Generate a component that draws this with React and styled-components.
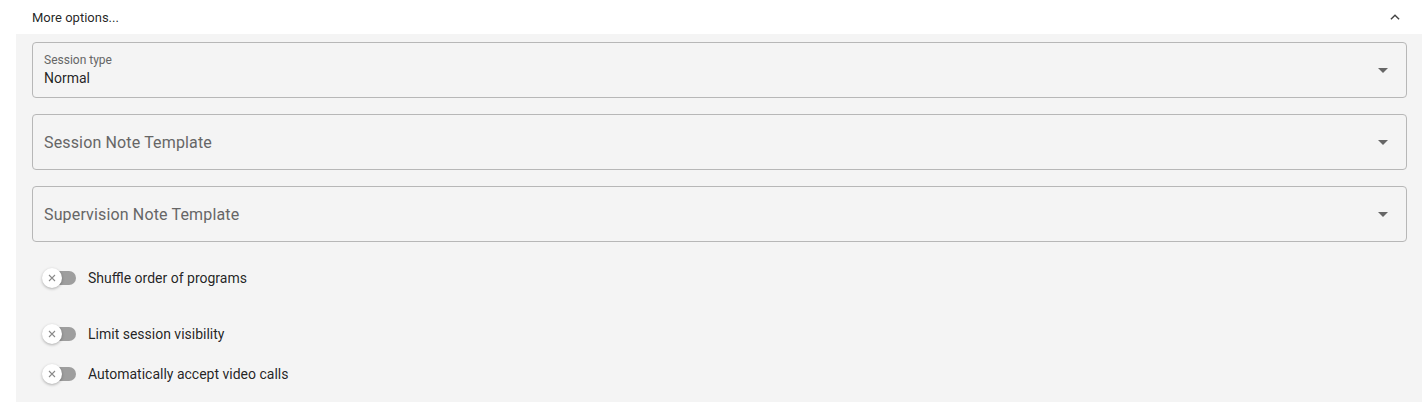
import React from "react";
import styled, { createGlobalStyle } from "styled-components";

const GlobalStyle = createGlobalStyle`
  body {
    margin: 0;
    background: #ffffff;
    font-family: Roboto, "Liberation Sans", sans-serif;
    color: rgba(0, 0, 0, 0.87);
  }
`;

const Page = styled.div`
  width: 1426px;
  height: 415px;
  background: #ffffff;
`;

const Header = styled.div`
  display: flex;
  align-items: center;
  justify-content: space-between;
  height: 34px;
  padding: 0 24px 0 32px;
`;

const HeaderTitle = styled.span`
  font-size: 13px;
  color: rgba(0, 0, 0, 0.87);
`;

const Panel = styled.div`
  margin: 0 4px 0 16px;
  background: #f4f4f4;
  padding: 8px 15px 16px 16px;
  height: 368px;
  box-sizing: border-box;
`;

const Fields = styled.div`
  display: flex;
  flex-direction: column;
  gap: 16px;
`;

const SelectBox = styled.div`
  display: flex;
  align-items: center;
  justify-content: space-between;
  height: 56px;
  box-sizing: border-box;
  border: 1px solid #b7b7b7;
  border-radius: 4px;
  padding: 0 18px 0 11px;
`;

const SelectText = styled.div`
  display: flex;
  flex-direction: column;
  padding-bottom: 2px;
`;

const SelectLabel = styled.span`
  font-size: 12px;
  color: #666666;
  line-height: 14px;
  margin-bottom: 3px;
`;

const SelectValue = styled.span`
  font-size: 14px;
  line-height: 16px;
  color: rgba(0, 0, 0, 0.87);
`;

const Placeholder = styled.span`
  font-size: 16px;
  letter-spacing: 0.15px;
  color: #666666;
`;

const Caret = styled.span`
  width: 0;
  height: 0;
  border-left: 5px solid transparent;
  border-right: 5px solid transparent;
  border-top: 5px solid #666666;
`;

const Toggles = styled.div`
  display: flex;
  flex-direction: column;
  padding: 24px 0 0 9px;
`;

const ToggleRow = styled.div`
  display: flex;
  align-items: center;
  height: 24px;
  margin-bottom: ${(p) => p.gap}px;
`;

const Switch = styled.span`
  position: relative;
  display: inline-block;
  width: 36px;
  height: 20px;
  margin-right: 11px;
`;

const Track = styled.span`
  position: absolute;
  left: 8px;
  top: 3px;
  width: 27px;
  height: 14px;
  border-radius: 7px;
  background: #9e9e9e;
`;

const Thumb = styled.span`
  position: absolute;
  left: 1px;
  top: 0;
  width: 20px;
  height: 20px;
  border-radius: 50%;
  background: #ffffff;
  box-shadow: 0 1px 3px rgba(0, 0, 0, 0.3);
  display: flex;
  align-items: center;
  justify-content: center;
`;

const ToggleLabel = styled.span`
  font-size: 14px;
  color: rgba(0, 0, 0, 0.87);
`;

const ChevronUp = () => (
  <svg width="14" height="14" viewBox="0 0 24 24" fill="none">
    <path d="M5 16l7-7 7 7" stroke="#444" strokeWidth="2.4" />
  </svg>
);

const Cross = () => (
  <svg width="8" height="8" viewBox="0 0 8 8">
    <path d="M1 1l6 6M7 1l-6 6" stroke="#8a8a8a" strokeWidth="1.1" />
  </svg>
);

const toggles = [
  { label: "Shuffle order of programs", gap: 32 },
  { label: "Limit session visibility", gap: 16 },
  { label: "Automatically accept video calls", gap: 0 },
];

const App = () => (
  <Page>
    <GlobalStyle />
    <Header>
      <HeaderTitle>More options...</HeaderTitle>
      <ChevronUp />
    </Header>
    <Panel>
      <Fields>
        <SelectBox>
          <SelectText>
            <SelectLabel>Session type</SelectLabel>
            <SelectValue>Normal</SelectValue>
          </SelectText>
          <Caret />
        </SelectBox>
        <SelectBox>
          <Placeholder>Session Note Template</Placeholder>
          <Caret />
        </SelectBox>
        <SelectBox>
          <Placeholder>Supervision Note Template</Placeholder>
          <Caret />
        </SelectBox>
      </Fields>
      <Toggles>
        {toggles.map((t) => (
          <ToggleRow key={t.label} gap={t.gap}>
            <Switch>
              <Track />
              <Thumb>
                <Cross />
              </Thumb>
            </Switch>
            <ToggleLabel>{t.label}</ToggleLabel>
          </ToggleRow>
        ))}
      </Toggles>
    </Panel>
  </Page>
);

export default App;
